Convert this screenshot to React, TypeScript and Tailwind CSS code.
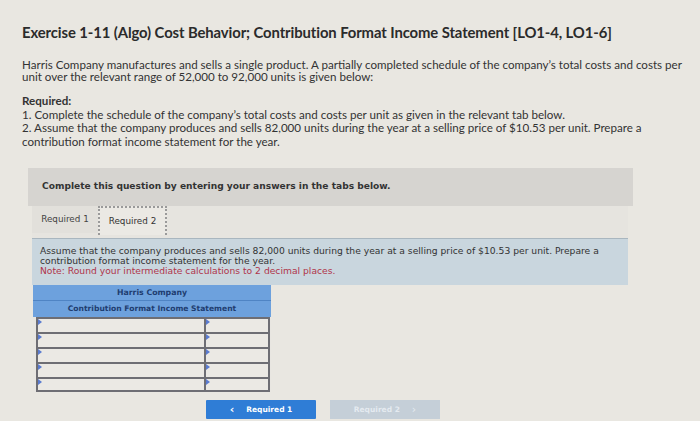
import React from "react";

export default function App() {
  const rows = [0, 1, 2, 3, 4];
  const marker =
    "absolute left-0 top-0 w-0 h-0 border-t-[3px] border-t-transparent border-b-[3px] border-b-transparent border-l-[4px] border-l-[#5a7bd0]";
  return (
    <div className="w-[700px] h-[421px] overflow-hidden bg-[#e9e7e1] text-[#2a2a2a]" style={{ fontFamily: "Lato, 'Liberation Sans', sans-serif" }}>
      <div className="pl-[22px] pt-[22px]">
        <h1 className="text-[14.85px] font-bold text-[#2b2b2b] leading-[20px] tracking-[-0.1px]">
          Exercise 1-11 (Algo) Cost Behavior; Contribution Format Income Statement [LO1-4, LO1-6]
        </h1>
        <p className="mt-[17px] text-[11.6px] leading-[12px] text-[#333] w-[672px]">
          Harris Company manufactures and sells a single product. A partially completed schedule of the company’s total costs and costs per unit over the relevant range of 52,000 to 92,000 units is given below:
        </p>
        <div className="mt-[11px] text-[11.6px] leading-[13.5px] text-[#333]">
          <div className="font-bold">Required:</div>
          <div>1. Complete the schedule of the company’s total costs and costs per unit as given in the relevant tab below.</div>
          <div className="w-[640px]">2. Assume that the company produces and sells 82,000 units during the year at a selling price of $10.53 per unit. Prepare a contribution format income statement for the year.</div>
        </div>
      </div>
      <div style={{ fontFamily: "'DejaVu Sans', Verdana, sans-serif" }}>
        <div className="ml-[28px] mt-[20px] w-[605px] h-[38px] bg-[#d6d4d0] flex items-center pl-[14px]">
          <span className="text-[9.1px] font-bold text-[#333]">Complete this question by entering your answers in the tabs below.</span>
        </div>
        <div className="ml-[32px] w-[596px] flex items-start h-[32px] bg-[#e6e4df]">
          <div className="h-[27px] w-[66px] flex items-center justify-center text-[8.8px] text-[#444] bg-[#e2e0db]">Required 1</div>
          <div className="h-[29px] w-[69px] flex items-center justify-center text-[8.8px] text-[#333] bg-[#ebe9e4] border-x-2 border-t-2 border-dotted border-[#9a9a9a]">Required 2</div>
        </div>
        <div className="ml-[32px] w-[596px] h-[47px] bg-[#c9d6de] border-t border-[#a9b6bf] pl-[8px] pt-[7px] text-[9.2px] leading-[10px] text-[#333]">
          <div className="w-[580px]">Assume that the company produces and sells 82,000 units during the year at a selling price of $10.53 per unit. Prepare a contribution format income statement for the year.</div>
          <div className="text-[#b0354a]">Note: Round your intermediate calculations to 2 decimal places.</div>
        </div>
        <div className="ml-[33px] w-[238px] bg-[#e8e6e1]">
          <div className="bg-[#6da1dd] text-[#1f3d70] font-bold text-[7.8px] text-center leading-[15px] h-[16px] border-b border-[#4f84c4]">Harris Company</div>
          <div className="bg-[#6da1dd] text-[#1f3d70] font-bold text-[7.6px] text-center leading-[16px] h-[16px]">Contribution Format Income Statement</div>
          <div className="pl-[3px] pr-[1px]">
            {rows.map((r) => (
              <div key={r} className={`flex h-[15px] border-[#6e6e74] ${r === 4 ? "border-b-2" : ""}`}>
                <div className="relative w-[168px] bg-[#ebe9e4] border-t-2 border-l-2 border-[#6e6e74]">
                  <span className={marker}></span>
                </div>
                <div className="relative flex-1 bg-[#ebe9e4] border-t-2 border-l-2 border-r-2 border-[#6e6e74]">
                  <span className={marker}></span>
                </div>
              </div>
            ))}
          </div>
        </div>
        <div className="flex mt-[8px] ml-[206px] gap-[14px]">
          <div className="w-[110px] h-[19px] bg-[#2f7dd6] rounded-[1px] flex items-center justify-center gap-[12px] text-white">
            <span className="text-[11px] font-bold leading-none">‹</span>
            <span className="text-[7.5px] font-bold">Required 1</span>
          </div>
          <div className="w-[110px] h-[19px] bg-[#c5cfd8] flex items-center justify-center gap-[12px] text-[#e4eaf0]">
            <span className="text-[7.5px] font-bold">Required 2</span>
            <span className="text-[11px] leading-none">›</span>
          </div>
        </div>
      </div>
    </div>
  );
}
